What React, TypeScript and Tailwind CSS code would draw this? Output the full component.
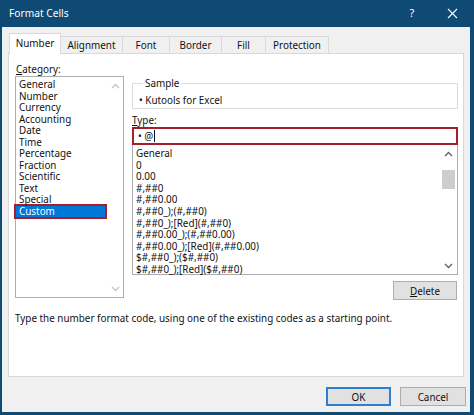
import React from 'react';

const categories = [
  'General',
  'Number',
  'Currency',
  'Accounting',
  'Date',
  'Time',
  'Percentage',
  'Fraction',
  'Scientific',
  'Text',
  'Special',
];

const formats = [
  'General',
  '0',
  '0.00',
  '#,##0',
  '#,##0.00',
  '#,##0_);(#,##0)',
  '#,##0_);[Red](#,##0)',
  '#,##0.00_);(#,##0.00)',
  '#,##0.00_);[Red](#,##0.00)',
  '$#,##0_);($#,##0)',
  '$#,##0_);[Red]($#,##0)',
];

const tabs = [
  { label: 'Number', width: 'w-[52px]', active: true },
  { label: 'Alignment', width: 'w-[62px]' },
  { label: 'Font', width: 'w-[47px]' },
  { label: 'Border', width: 'w-[52px]' },
  { label: 'Fill', width: 'w-[44px]' },
  { label: 'Protection', width: 'w-[63px]' },
];

function Chevron({ up, color }: { up?: boolean; color: string }) {
  return (
    <svg width="9" height="6" viewBox="0 0 9 6" fill="none">
      <path
        d={up ? 'M1 5L4.5 1.5L8 5' : 'M1 1L4.5 4.5L8 1'}
        stroke={color}
        strokeWidth="1.3"
      />
    </svg>
  );
}

export default function App() {
  return (
    <div className="w-[474px] h-[415px] flex flex-col bg-[#0e4a73] font-['Segoe_UI','Noto_Sans',sans-serif] text-[9.9px] text-[#111] overflow-hidden">
      {/* title bar */}
      <div className="h-[27px] flex items-center pl-[9px] text-white text-[10.2px]">
        <span>Format Cells</span>
        <span className="ml-auto w-[36px] text-center text-[11px]">?</span>
        <span className="w-[44px] flex justify-center">
          <svg width="11" height="11" viewBox="0 0 11 11">
            <path d="M1 1L10 10M10 1L1 10" stroke="#fff" strokeWidth="1.1" />
          </svg>
        </span>
      </div>

      <div className="flex-1 flex flex-col bg-[#f0f0f0] ml-[2px] mr-[4px] mb-[3px]">
        {/* tabs */}
        <div className="flex items-end h-[26px] pt-[6px] pl-[7px]">
          {tabs.map((t) =>
            t.active ? (
              <div
                key={t.label}
                className={`${t.width} h-[21px] -mb-px relative z-10 bg-white border-x border-t border-[#d9d9d9] flex items-center justify-center pb-[2px]`}
              >
                {t.label}
              </div>
            ) : (
              <div
                key={t.label}
                className={`${t.width} h-[17px] border-t border-r border-[#d9d9d9] flex items-center justify-center`}
              >
                {t.label}
              </div>
            )
          )}
        </div>

        {/* panel */}
        <div className="mx-[6px] h-[324px] bg-white border border-[#d9d9d9] pl-[6px] pt-[8px]">
          <div className="flex">
            <div className="w-[109px] flex flex-col">
              <div className="h-[14px] leading-[14px] pl-[1px]">
                <span className="underline">C</span>ategory:
              </div>
              <div className="h-[222px] border border-[#abadb3] flex">
                <div className="flex-1 pt-[2px] leading-[11.55px]">
                  {categories.map((c) => (
                    <div key={c} className="pl-[3px] h-[11.55px]">
                      {c}
                    </div>
                  ))}
                  <div className="-ml-[2px] -mt-[2px] w-[93px] h-[15px] leading-[11px] border-2 border-[#a41f2e] bg-[#0078d7] text-white pl-[3px]">
                    Custom
                  </div>
                </div>
                <div className="w-[17px] flex flex-col">
                  <div className="h-[17px] flex items-center justify-center">
                    <Chevron up color="#c4c4c4" />
                  </div>
                  <div className="flex-1" />
                  <div className="h-[17px] flex items-center justify-center">
                    <Chevron color="#c4c4c4" />
                  </div>
                </div>
              </div>
            </div>

            <div className="ml-[8px] w-[326px] mt-[15px] flex flex-col">
              <fieldset className="border border-[#dcdcdc] pl-[6px] pb-[2px]">
                <legend className="ml-[4px] px-[2px] leading-[12px]">Sample</legend>
                <div className="mt-[5px] leading-[12px]">• Kutools for Excel</div>
              </fieldset>
              <div className="mt-[4px] h-[14px] leading-[14px]">
                <span className="underline">T</span>ype:
              </div>
              <div className="h-[18px] border-2 border-[#a41f2e] flex items-center pl-[4px] leading-[12px]">
                • @<span className="ml-px inline-block w-px h-[12px] bg-[#111]" />
              </div>
              <div className="h-[130px] border border-[#abadb3] border-t-0 flex">
                <div className="flex-1 pt-[3px] pl-[3px] leading-[11.6px]">
                  {formats.map((f) => (
                    <div key={f} className="h-[11.6px] whitespace-nowrap">
                      {f}
                    </div>
                  ))}
                </div>
                <div className="w-[17px] flex flex-col items-center">
                  <div className="h-[17px] flex items-center justify-center">
                    <Chevron up color="#606060" />
                  </div>
                  <div className="mt-[8px] w-[13px] h-[19px] bg-[#cdcdcd]" />
                  <div className="flex-1" />
                  <div className="h-[17px] flex items-center justify-center">
                    <Chevron color="#606060" />
                  </div>
                </div>
              </div>
              <button className="mt-[6px] self-end mr-[1px] w-[64px] h-[19px] bg-[#e1e1e1] border border-[#adadad] leading-[12px]">
                <span className="underline">D</span>elete
              </button>
            </div>
          </div>
          <div className="mt-[11px] leading-[14px]">
            Type the number format code, using one of the existing codes as a starting point.
          </div>
        </div>

        {/* footer */}
        <div className="mt-[10px] flex justify-end gap-[9px] pr-[4px]">
          <button className="w-[65px] h-[19px] bg-[#e1e1e1] border-2 border-[#2f7fd1] leading-[12px]">
            OK
          </button>
          <button className="w-[66px] h-[19px] bg-[#e1e1e1] border border-[#adadad] leading-[12px]">
            Cancel
          </button>
        </div>
      </div>
    </div>
  );
}
